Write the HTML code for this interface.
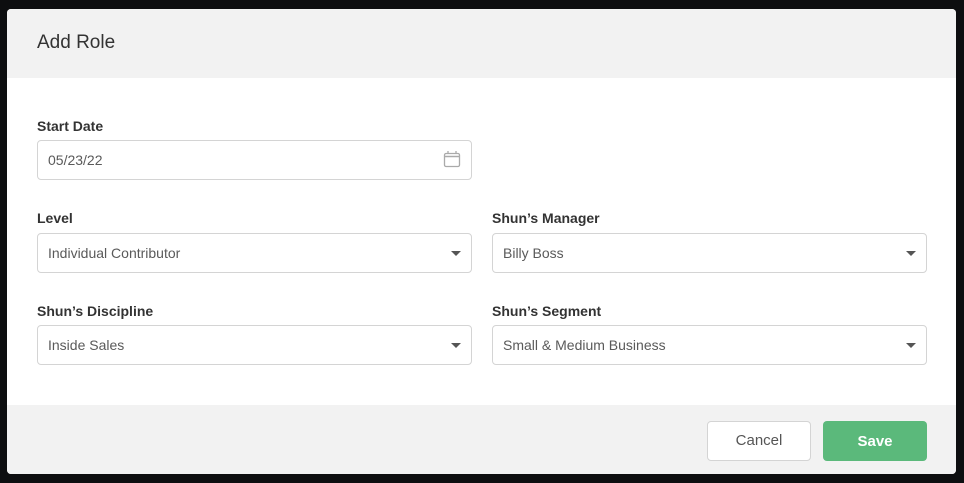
<!DOCTYPE html>
<html><head><style>
*{box-sizing:border-box;margin:0;padding:0}
body{width:964px;height:483px;background:#0d0e10;font-family:"Liberation Sans",sans-serif;position:relative;overflow:hidden}
.modal{position:absolute;left:7px;top:9px;width:949px;height:465px;background:#fff;border-radius:4px;overflow:hidden}
.hd{height:69px;background:#f2f2f2;padding-left:30px;line-height:68px;font-size:19px;color:#333;font-weight:500}
.ft{position:absolute;left:0;right:0;bottom:0;height:69px;background:#f2f2f2}
.lbl{position:absolute;font-size:14px;font-weight:bold;color:#333}
.inp{position:absolute;height:40px;border:1px solid #d4d4d4;border-radius:4px;font-size:14px;color:#5a5a5a;padding-left:10px;line-height:38px;background:#fff}
.car{position:absolute;right:10px;top:17px;width:0;height:0;border-left:5px solid transparent;border-right:5px solid transparent;border-top:5px solid #555}
.btn{position:absolute;top:412px;height:40px;width:104px;border-radius:4px;font-size:15px;text-align:center;line-height:39px}
</style></head><body>
<div class="modal">
<div class="hd">Add Role</div>
<div class="lbl" style="left:30px;top:109px">Start Date</div>
<div class="inp" style="left:30px;top:131px;width:435px">05/23/22
<svg style="position:absolute;right:10px;top:9px" width="18" height="18" viewBox="0 0 18 18"><rect x="1.5" y="3.5" width="15" height="13" rx="1.5" fill="none" stroke="#aaa" stroke-width="1.3"/><line x1="1.5" y1="6.5" x2="16.5" y2="6.5" stroke="#aaa" stroke-width="1.5"/><line x1="5" y1="1" x2="5" y2="4" stroke="#aaa" stroke-width="1.3"/><line x1="13" y1="1" x2="13" y2="4" stroke="#aaa" stroke-width="1.3"/></svg></div>
<div class="lbl" style="left:30px;top:201px">Level</div>
<div class="inp" style="left:30px;top:224px;width:435px">Individual Contributor<div class="car"></div></div>
<div class="lbl" style="left:485px;top:201px">Shun’s Manager</div>
<div class="inp" style="left:485px;top:224px;width:435px">Billy Boss<div class="car"></div></div>
<div class="lbl" style="left:30px;top:294px">Shun’s Discipline</div>
<div class="inp" style="left:30px;top:316px;width:435px">Inside Sales<div class="car"></div></div>
<div class="lbl" style="left:485px;top:294px">Shun’s Segment</div>
<div class="inp" style="left:485px;top:316px;width:435px">Small &amp; Medium Business<div class="car"></div></div>
<div class="ft"></div>
<div class="btn" style="left:700px;background:#fff;border:1px solid #d4d4d4;color:#555;line-height:38px">Cancel</div>
<div class="btn" style="left:816px;background:#5bb97b;color:#fff;font-weight:bold;line-height:41px">Save</div>
</div>
</body></html>
